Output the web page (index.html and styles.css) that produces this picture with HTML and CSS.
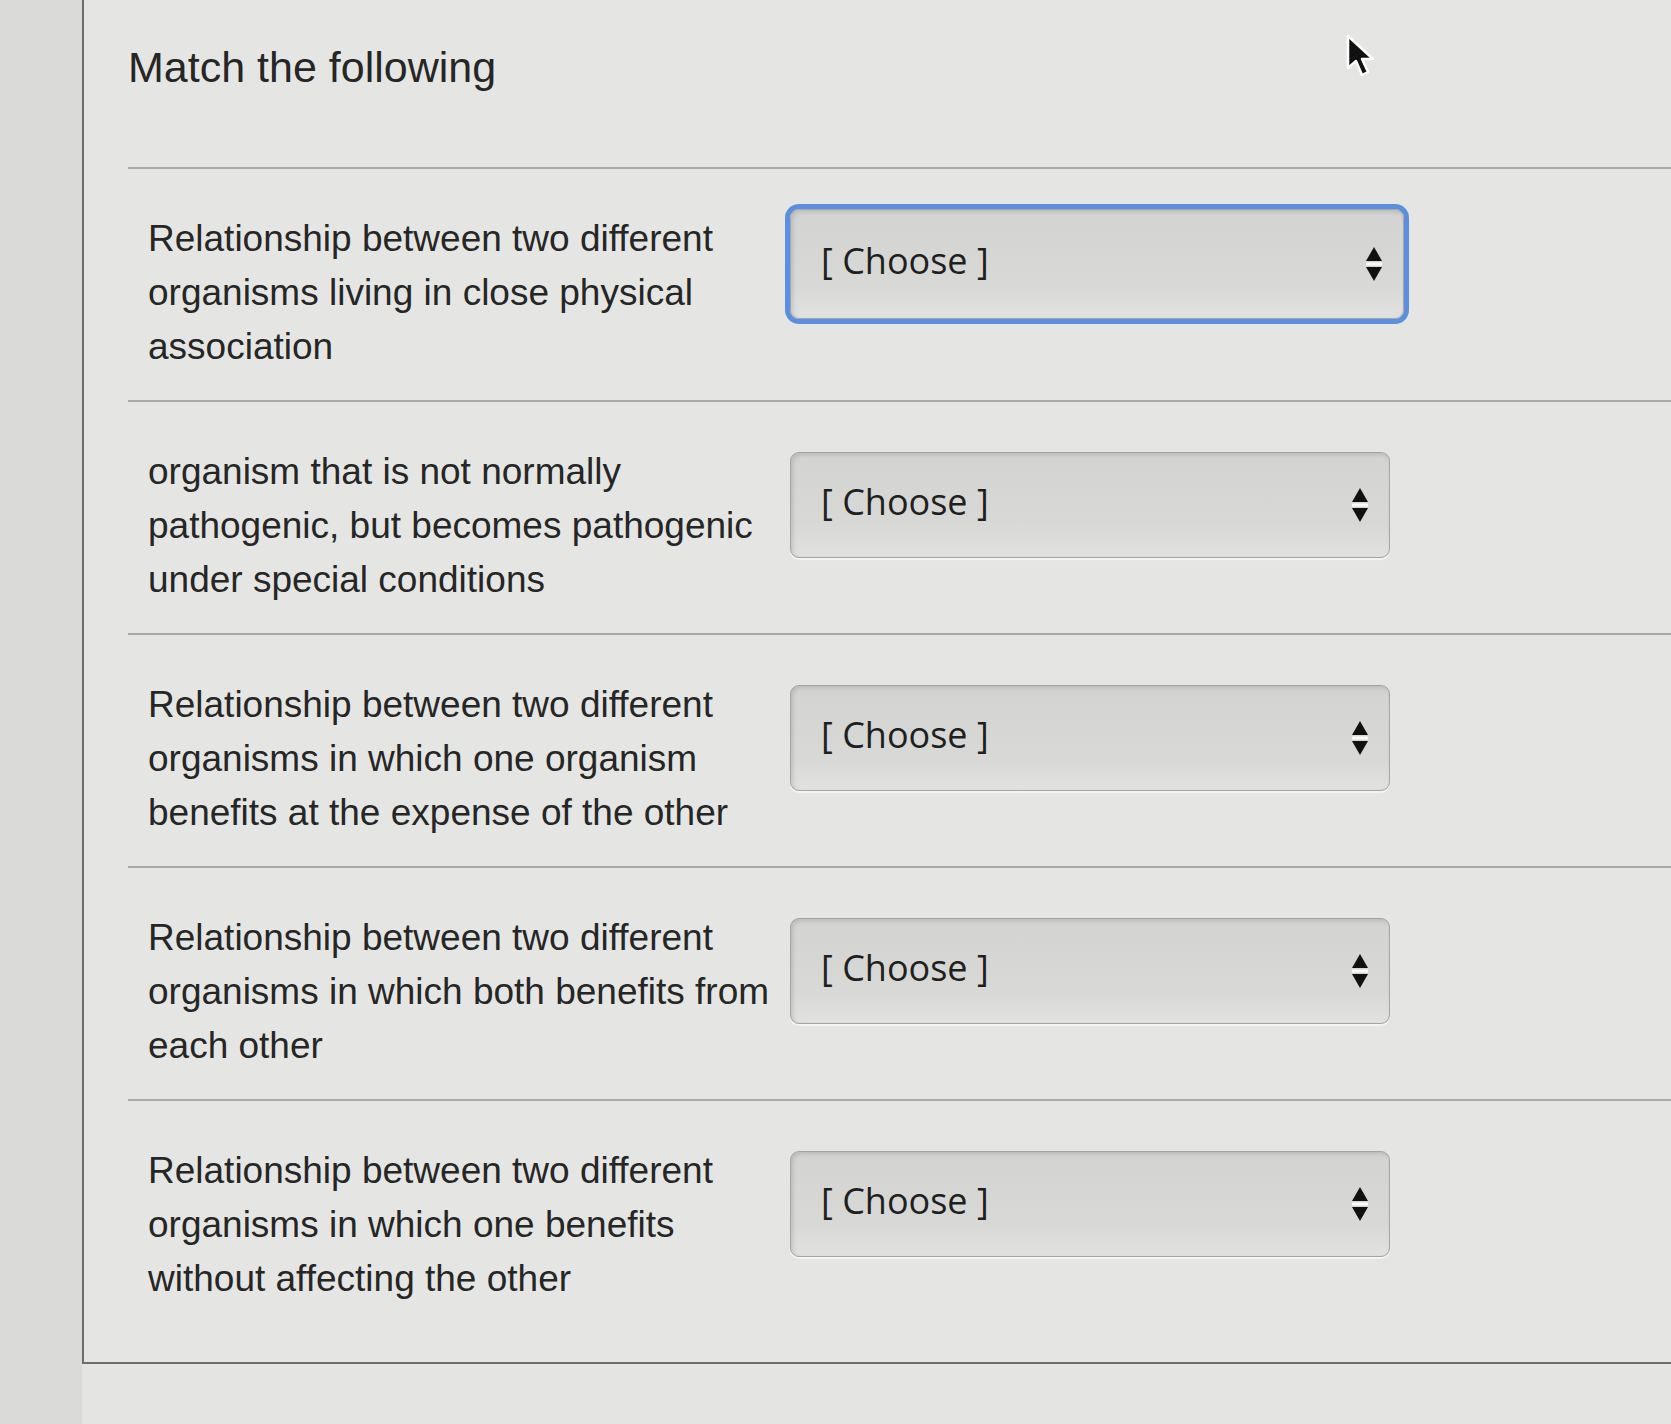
FILE: index.html
```html
<!DOCTYPE html>
<html lang="en">
<head>
<meta charset="utf-8">
<title>Match the following</title>
<link rel="stylesheet" href="styles.css">
</head>
<body>
<div class="page">
  <aside class="strip"></aside>
  <main class="panel">
    <h1 class="title">Match the following</h1>
    <div class="rows">
      <div class="row">
        <p class="prompt">Relationship between two different organisms living in close physical association</p>
        <div class="select is-focused">
          <span class="select-label">[ Choose ]</span>
          <svg class="arrows" viewBox="0 0 18 36" width="18" height="36"><path d="M9 1 L17 15 L1 15 Z" fill="#111"/><rect x="1" y="16.5" width="16" height="3" fill="#fbfbfb"/><path d="M1 21 L17 21 L9 35 Z" fill="#111"/></svg>
        </div>
      </div>
      <div class="row">
        <p class="prompt">organism that is not normally pathogenic, but becomes pathogenic under special conditions</p>
        <div class="select">
          <span class="select-label">[ Choose ]</span>
          <svg class="arrows" viewBox="0 0 18 36" width="18" height="36"><path d="M9 1 L17 15 L1 15 Z" fill="#111"/><rect x="1" y="16.5" width="16" height="3" fill="#fbfbfb"/><path d="M1 21 L17 21 L9 35 Z" fill="#111"/></svg>
        </div>
      </div>
      <div class="row">
        <p class="prompt">Relationship between two different organisms in which one organism benefits at the expense of the other</p>
        <div class="select">
          <span class="select-label">[ Choose ]</span>
          <svg class="arrows" viewBox="0 0 18 36" width="18" height="36"><path d="M9 1 L17 15 L1 15 Z" fill="#111"/><rect x="1" y="16.5" width="16" height="3" fill="#fbfbfb"/><path d="M1 21 L17 21 L9 35 Z" fill="#111"/></svg>
        </div>
      </div>
      <div class="row">
        <p class="prompt">Relationship between two different organisms in which both benefits from each other</p>
        <div class="select">
          <span class="select-label">[ Choose ]</span>
          <svg class="arrows" viewBox="0 0 18 36" width="18" height="36"><path d="M9 1 L17 15 L1 15 Z" fill="#111"/><rect x="1" y="16.5" width="16" height="3" fill="#fbfbfb"/><path d="M1 21 L17 21 L9 35 Z" fill="#111"/></svg>
        </div>
      </div>
      <div class="row">
        <p class="prompt">Relationship between two different organisms in which one benefits without affecting the other</p>
        <div class="select">
          <span class="select-label">[ Choose ]</span>
          <svg class="arrows" viewBox="0 0 18 36" width="18" height="36"><path d="M9 1 L17 15 L1 15 Z" fill="#111"/><rect x="1" y="16.5" width="16" height="3" fill="#fbfbfb"/><path d="M1 21 L17 21 L9 35 Z" fill="#111"/></svg>
        </div>
      </div>
    </div>
  </main>
  <svg class="cursor" viewBox="0 0 32 48" width="32" height="48"><path d="M3 2 L3 34 L11 27 L17 41 L23 38 L17 25 L28 25 Z" fill="#111" stroke="#fff" stroke-width="2.5" stroke-linejoin="round"/></svg>
</div>
</body>
</html>
```

FILE: styles.css
```css
html, body {
  margin: 0;
  padding: 0;
}
body {
  width: 1671px;
  height: 1424px;
  overflow: hidden;
  background: #e4e5e2;
  font-family: "Liberation Sans", Arial, sans-serif;
  color: #2a2a2a;
}
.page {
  position: relative;
  display: flex;
  width: 1671px;
  height: 1424px;
}
.strip {
  flex: 0 0 82px;
  height: 100%;
  background: #dadbd8;
}
.panel {
  flex: 1 1 auto;
  height: 1364px;
  box-sizing: border-box;
  border-left: 2px solid #6e6f6d;
  border-bottom: 2px solid #6e6f6d;
  padding-left: 44px;
  background: #e5e6e3;
}
.title {
  margin: 42px 0 75px 0;
  font-size: 43px;
  line-height: 50px;
  font-weight: 400;
  color: #262626;
}
.rows {
  border-top: 2px solid #a9aaa7;
}
.row {
  display: flex;
  align-items: flex-start;
  height: 233px;
  box-sizing: border-box;
  padding: 43px 0 0 20px;
  border-bottom: 2px solid #a9aaa7;
}
.row:last-child {
  border-bottom: none;
}
.prompt {
  flex: 0 0 642px;
  margin: 0;
  font-size: 37px;
  line-height: 54px;
  color: #262626;
}
.select {
  flex: 0 0 600px;
  height: 106px;
  box-sizing: border-box;
  margin-top: 7px;
  display: flex;
  align-items: center;
  justify-content: space-between;
  padding: 0 20px 0 30px;
  border: 1px solid #a4a5a2;
  border-radius: 9px;
  background: linear-gradient(#d3d4d1, #d8d9d6 70%, #e1e2df);
  box-shadow: inset 2px 2px 4px rgba(0,0,0,0.12), 0 2px 1px rgba(255,255,255,0.6);
}
.select.is-focused {
  margin-top: -3px;
  height: 110px;
  width: 614px;
  flex-basis: 614px;
  border-color: #9fa7b2;
  box-shadow: 0 0 0 5px #5c8fdc, inset 2px 2px 4px rgba(0,0,0,0.12);
}
.select-label {
  font-family: "Open Sans", "Noto Sans", sans-serif;
  font-size: 36px;
  line-height: 1;
  color: #1f1f1f;
  margin-top: -6px;
}
.arrows {
  display: block;
}
.cursor {
  position: absolute;
  left: 1345px;
  top: 34px;
}
```
